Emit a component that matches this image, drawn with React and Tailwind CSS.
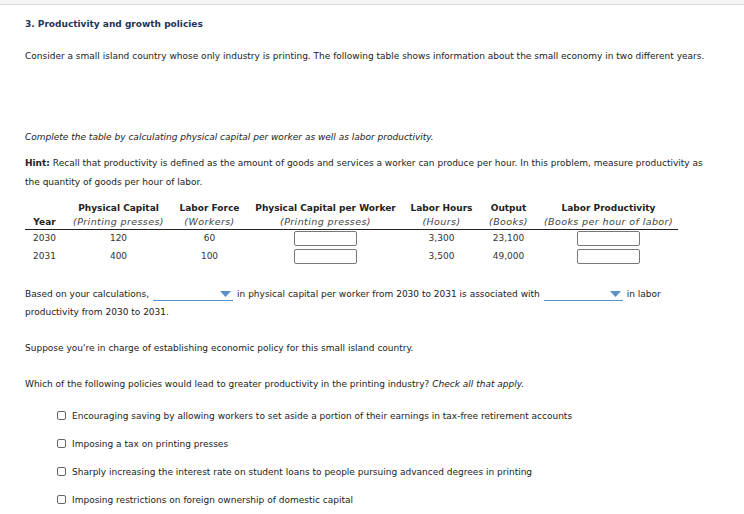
import React from "react";

const cols = [
  { w: "w-[39px]" },
  { w: "w-[109px]" },
  { w: "w-[73px]" },
  { w: "w-[159px]" },
  { w: "w-[73px]" },
  { w: "w-[61px]" },
  { w: "w-[139px]" },
];

const rows = [
  { year: "2030", capital: "120", labor: "60", hours: "3,300", output: "23,100" },
  { year: "2031", capital: "400", labor: "100", hours: "3,500", output: "49,000" },
];

const policies = [
  "Encouraging saving by allowing workers to set aside a portion of their earnings in tax-free retirement accounts",
  "Imposing a tax on printing presses",
  "Sharply increasing the interest rate on student loans to people pursuing advanced degrees in printing",
  "Imposing restrictions on foreign ownership of domestic capital",
];

function InputBox() {
  return <div className="mx-auto w-[63px] h-[15px] border border-[#777] rounded-[2px] bg-white" />;
}

function Dropdown({ width }) {
  return (
    <span className={`inline-flex items-center justify-end ${width} h-[14px] border-b border-[#5b8fc7] align-middle mx-[4px] pr-[2px]`}>
      <svg width="11" height="6" viewBox="0 0 11 6">
        <path d="M0 0 L11 0 L5.5 6 Z" fill="#5b8fc7" />
      </svg>
    </span>
  );
}

export default function App() {
  return (
    <div className="w-[744px] h-[514px] bg-white overflow-hidden text-[#222] text-[9px]" style={{ fontFamily: "'DejaVu Sans', Verdana, sans-serif" }}>
      <div className="h-[5px] bg-[#f5f5f5] border-b border-[#dcdcdc]" />
      <div className="px-[25px]">
        <h2 className="mt-[12px] leading-[14px] font-bold text-[#1f3358] text-[9px]">3. Productivity and growth policies</h2>
        <p className="mt-[18px] leading-[14px]">
          Consider a small island country whose only industry is printing. The following table shows information about the small economy in two different years.
        </p>
        <p className="mt-[67px] leading-[14px] italic">Complete the table by calculating physical capital per worker as well as labor productivity.</p>
        <p className="mt-[10px] leading-[19px]">
          <span className="font-bold">Hint:</span> Recall that productivity is defined as the amount of goods and services a worker can produce per hour. In this problem, measure productivity as the quantity of goods per hour of labor.
        </p>

        <table className="mt-[9px] border-collapse table-fixed w-[653px]">
          <colgroup>
            {cols.map((c, i) => (
              <col key={i} className={c.w} />
            ))}
          </colgroup>
          <thead>
            <tr className="h-[14px] leading-[14px]">
              <th></th>
              <th className="font-bold">Physical Capital</th>
              <th className="font-bold">Labor Force</th>
              <th className="font-bold whitespace-nowrap">Physical Capital per Worker</th>
              <th className="font-bold">Labor Hours</th>
              <th className="font-bold">Output</th>
              <th className="font-bold">Labor Productivity</th>
            </tr>
            <tr className="h-[14px] leading-[14px] border-b border-[#222]">
              <th className="font-bold">Year</th>
              <th className="font-normal italic text-[9.5px] tracking-[0.4px] text-[#444] whitespace-nowrap">(Printing presses)</th>
              <th className="font-normal italic text-[9.5px] tracking-[0.4px] text-[#444]">(Workers)</th>
              <th className="font-normal italic text-[9.5px] tracking-[0.4px] text-[#444]">(Printing presses)</th>
              <th className="font-normal italic text-[9.5px] tracking-[0.4px] text-[#444]">(Hours)</th>
              <th className="font-normal italic text-[9.5px] tracking-[0.4px] text-[#444]">(Books)</th>
              <th className="font-normal italic text-[9.5px] tracking-[0.4px] text-[#444] whitespace-nowrap">(Books per hour of labor)</th>
            </tr>
          </thead>
          <tbody>
            {rows.map((r) => (
              <tr key={r.year} className="h-[18px] text-center text-[#333]">
                <td>{r.year}</td>
                <td>{r.capital}</td>
                <td>{r.labor}</td>
                <td><InputBox /></td>
                <td>{r.hours}</td>
                <td>{r.output}</td>
                <td><InputBox /></td>
              </tr>
            ))}
          </tbody>
        </table>

        <p className="mt-[19px] leading-[18px] w-[650px]">
          Based on your calculations,
          <Dropdown width="w-[80px]" />
          in physical capital per worker from 2030 to 2031 is associated with
          <Dropdown width="w-[79px]" />
          in labor productivity from 2030 to 2031.
        </p>

        <p className="mt-[20px] leading-[14px]">Suppose you're in charge of establishing economic policy for this small island country.</p>
        <p className="mt-[22px] leading-[14px]">
          Which of the following policies would lead to greater productivity in the printing industry? <span className="italic">Check all that apply.</span>
        </p>

        <div className="mt-[11px] ml-[32px] flex flex-col">
          {policies.map((p) => (
            <label key={p} className="h-[28px] flex items-center gap-[6px] leading-[14px]">
              <span className="w-[9px] h-[9px] border border-[#666] rounded-[2px] bg-white shrink-0" />
              <span>{p}</span>
            </label>
          ))}
        </div>
      </div>
    </div>
  );
}
